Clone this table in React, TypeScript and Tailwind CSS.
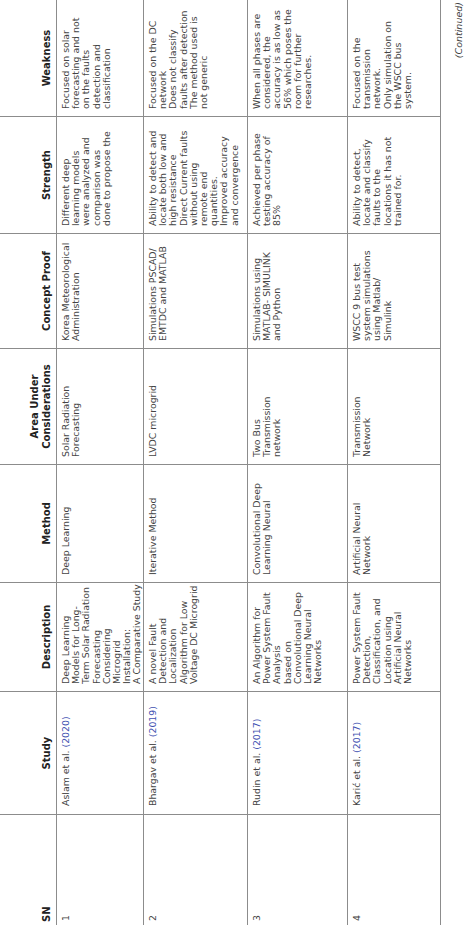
const COLS = "grid grid-cols-[110px_123px_109px_118px_116px_115px_117px_117px]";

type Row = {
  sn: string;
  author: string;
  year: string;
  cells: string[][];
  h: string;
};

const HEADERS: string[][] = [
  ["Study"],
  ["Description"],
  ["Method"],
  ["Area Under", "Considerations"],
  ["Concept Proof"],
  ["Strength"],
  ["Weakness"],
];

const ROWS: Row[] = [
  {
    sn: "1",
    author: "Aslam et al.",
    year: "(2020)",
    h: "h-[87px]",
    cells: [
      ["Deep Learning", "Models for Long-", "Term Solar Radiation", "Forecasting", "Considering", "Microgrid", "Installation:", "A Comparative Study"],
      ["Deep Learning"],
      ["Solar Radiation", "Forecasting"],
      ["Korea Meteorological", "Administration"],
      ["Different deep", "learning models", "were analyzed and", "comparison was", "done to propose the"],
      ["Focused on solar", "forecasting and not", "on the faults", "detection and", "classification"],
    ],
  },
  {
    sn: "2",
    author: "Bhargav et al.",
    year: "(2019)",
    h: "h-[104px]",
    cells: [
      ["A novel Fault", "Detection and", "Localization", "Algorithm for Low", "Voltage DC Microgrid"],
      ["Iterative Method"],
      ["LVDC microgrid"],
      ["Simulations PSCAD/", "EMTDC and MATLAB"],
      ["Ability to detect and", "locate both low and", "high resistance", "Direct Current faults", "without using", "remote end", "quantities.", "Improved accuracy", "and convergence"],
      ["Focused on the DC", "network", "Does not classify", "faults after detection", "The method used is", "not generic"],
    ],
  },
  {
    sn: "3",
    author: "Rudin et al.",
    year: "(2017)",
    h: "h-[100px]",
    cells: [
      ["An Algorithm for", "Power System Fault", "Analysis", "based on", "Convolutional Deep", "Learning Neural", "Networks"],
      ["Convolutional Deep", "Learning Neural"],
      ["Two Bus", "Transmission", "network"],
      ["Simulations using", "MATLAB- SIMULINK", "and Python"],
      ["Achieved per phase", "testing accuracy of", "85%"],
      ["When all phases are", "considered, the", "accuracy is as low as", "56% which poses the", "room for further", "researches."],
    ],
  },
  {
    sn: "4",
    author: "Karić et al.",
    year: "(2017)",
    h: "h-[93px]",
    cells: [
      ["Power System Fault", "Detection,", "Classification, and", "Location using", "Artificial Neural", "Networks"],
      ["Artificial Neural", "Network"],
      ["Transmission", "Network"],
      ["WSCC 9 bus test", "system simulations", "using Matlab/", "Simulink"],
      ["Ability to detect,", "locate and classify", "faults to the", "locations it has not", "trained for."],
      ["Focused on the", "transmission", "network.", "Only simulation on", "the WSCC bus", "system."],
    ],
  },
];

const Lines = ({ lines }: { lines: string[] }) => (
  <>
    {lines.map((l, i) => (
      <div key={i} className="whitespace-nowrap">{l}</div>
    ))}
  </>
);

export default function App() {
  return (
    <div className="relative w-[474px] h-[925px] overflow-hidden bg-white">
      <div
        className="absolute left-0 top-[925px] w-[925px] h-[474px] origin-top-left -rotate-90 text-[#444] text-[9.4px] leading-[10.2px]"
        style={{ fontFamily: '"DejaVu Sans", "Noto Sans", sans-serif' }}
      >
        <div className={`${COLS} h-[57px] border-b border-[#8c8c8c] font-bold text-[10px] leading-[11.5px] text-[#222]`}>
          <div className="flex items-end pl-[3px] pb-[4px]">SN</div>
          {HEADERS.map((h, i) => (
            <div key={i} className="flex flex-col items-center justify-end pb-[4px] text-center border-l border-[#8c8c8c]">
              <Lines lines={h} />
            </div>
          ))}
        </div>

        {ROWS.map((r) => (
          <div key={r.sn} className={`${COLS} ${r.h} border-b border-[#8c8c8c]`}>
            <div className="pl-[4px] pt-[4px]">{r.sn}</div>
            <div className="pl-[8px] pt-[4px] border-l border-[#8c8c8c] whitespace-nowrap">
              {r.author} <span className="text-[#3d4fb0]">{r.year}</span>
            </div>
            {r.cells.map((c, i) => (
              <div key={i} className="pl-[7px] pt-[4px] border-l border-[#8c8c8c]">
                <Lines lines={c} />
              </div>
            ))}
          </div>
        ))}

        <div className="flex justify-end pt-[13px] pr-[2px] italic text-[9.5px]">(Continued)</div>
      </div>
    </div>
  );
}
